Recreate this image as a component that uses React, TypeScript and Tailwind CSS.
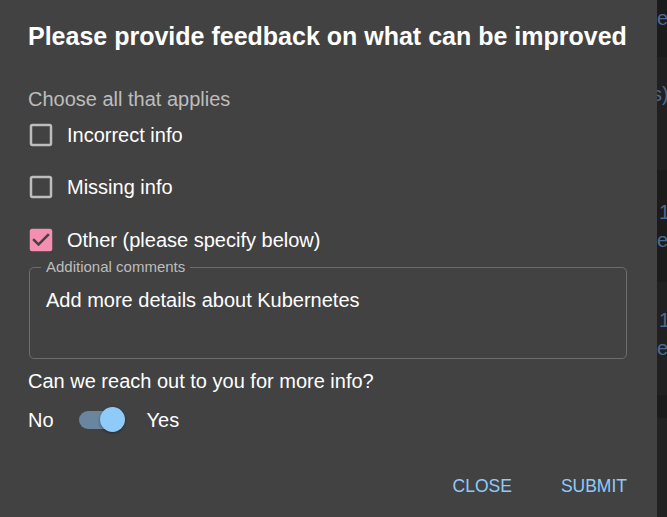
import { useState } from 'react'

const options = [
  { id: 'incorrect', label: 'Incorrect info' },
  { id: 'missing', label: 'Missing info' },
  { id: 'other', label: 'Other (please specify below)' },
]

function CheckIcon({ checked }: { checked: boolean }) {
  if (checked) {
    return (
      <svg viewBox="0 0 24 24" className="w-[30px] h-[30px] shrink-0">
        <rect x="3" y="3" width="18" height="18" rx="2" fill="#f48fb1" />
        <path d="M10 17l-5-5 1.41-1.41L10 14.17l7.59-7.59L19 8l-9 9z" fill="#424242" />
      </svg>
    )
  }
  return (
    <svg viewBox="0 0 24 24" className="w-[30px] h-[30px] shrink-0">
      <path
        d="M19 5v14H5V5h14m0-2H5c-1.1 0-2 .9-2 2v14c0 1.1.9 2 2 2h14c1.1 0 2-.9 2-2V5c0-1.1-.9-2-2-2z"
        fill="#bdbdbd"
      />
    </svg>
  )
}

export default function App() {
  const [checked, setChecked] = useState<Record<string, boolean>>({ other: true })
  const [reach, setReach] = useState(true)

  return (
    <div
      className="flex w-[667px] h-[517px] overflow-hidden bg-[#212121]"
      style={{ fontFamily: '"Liberation Sans", Arial, sans-serif' }}
    >
      {/* dialog */}
      <div className="w-[657px] h-[517px] shrink-0 bg-[#424242] pl-[28px] pr-[30px] pt-[21px] text-white">
        <h2 className="text-[25px] leading-[30px] font-bold">Please provide feedback on what can be improved</h2>

        <p className="mt-[37.5px] text-[20px] leading-[20px] text-[#bdbdbd]">Choose all that applies</p>

        <div className="flex flex-col">
          {options.map(o => (
            <label
              key={o.id}
              className="flex items-center h-[52.5px] cursor-pointer"
              onClick={() => setChecked({ ...checked, [o.id]: !checked[o.id] })}
            >
              <span className="-ml-[2px]">
                <CheckIcon checked={!!checked[o.id]} />
              </span>
              <span className="ml-[11px] text-[20px] leading-[30px]">{o.label}</span>
            </label>
          ))}
        </div>

        <fieldset className="-mt-[7px] ml-[1px] h-[100px] border border-[#6d6d6d] rounded-[5px] pl-[11px] pr-[14px]">
          <legend className="px-[5px] text-[15px] leading-[16px] text-[#bdbdbd]">Additional comments</legend>
          <div className="ml-[5px] pt-[14px] text-[20px] leading-[23px]">Add more details about Kubernetes</div>
        </fieldset>

        <p className="mt-[7px] text-[20px] leading-[30px]">Can we reach out to you for more info?</p>

        <div className="flex items-center h-[47.5px] text-[20px] leading-[30px]">
          <span>No</span>
          <button
            type="button"
            onClick={() => setReach(!reach)}
            className="relative ml-[25px] w-[42.5px] h-[17.5px] rounded-full bg-[#90caf9]/50"
          >
            <span
              className={`absolute top-[-3.75px] w-[25px] h-[25px] rounded-full bg-[#90caf9] shadow-[0_1px_3px_rgba(0,0,0,0.4)] ${
                reach ? 'left-[21.25px]' : 'left-[-3.75px]'
              }`}
            />
          </button>
          <span className="ml-[25.5px]">Yes</span>
        </div>

        <div className="mt-[27px] flex justify-end gap-[49px] text-[17.5px] leading-[30px] text-[#90caf9]">
          <button type="button" className="uppercase">Close</button>
          <button type="button" className="uppercase">Submit</button>
        </div>
      </div>

      {/* page behind the backdrop */}
      <div className="flex-1 flex flex-col text-[20px] leading-[30px] text-[#4a6a94] whitespace-nowrap overflow-hidden">
        <div className="h-[57px] bg-[#1b1b1b] pt-[3px]">e</div>
        <div className="h-[113px] bg-[#202020] pt-[22px]"><span className="-ml-[5px]">s)</span></div>
        <div className="h-[112px] bg-[#1b1b1b] pt-[27px] pl-[2px]">
          <div>1</div>
          <div className="-ml-[2px] -mt-[2px]">e</div>
        </div>
        <div className="h-[113px] bg-[#202020] pt-[23px] pl-[2px]">
          <div>1</div>
          <div className="-ml-[2px] -mt-[2px]">e</div>
        </div>
        <div className="h-[23px] bg-[#1b1b1b]" />
        <div className="flex-1 bg-[#222222]" />
      </div>
    </div>
  )
}
